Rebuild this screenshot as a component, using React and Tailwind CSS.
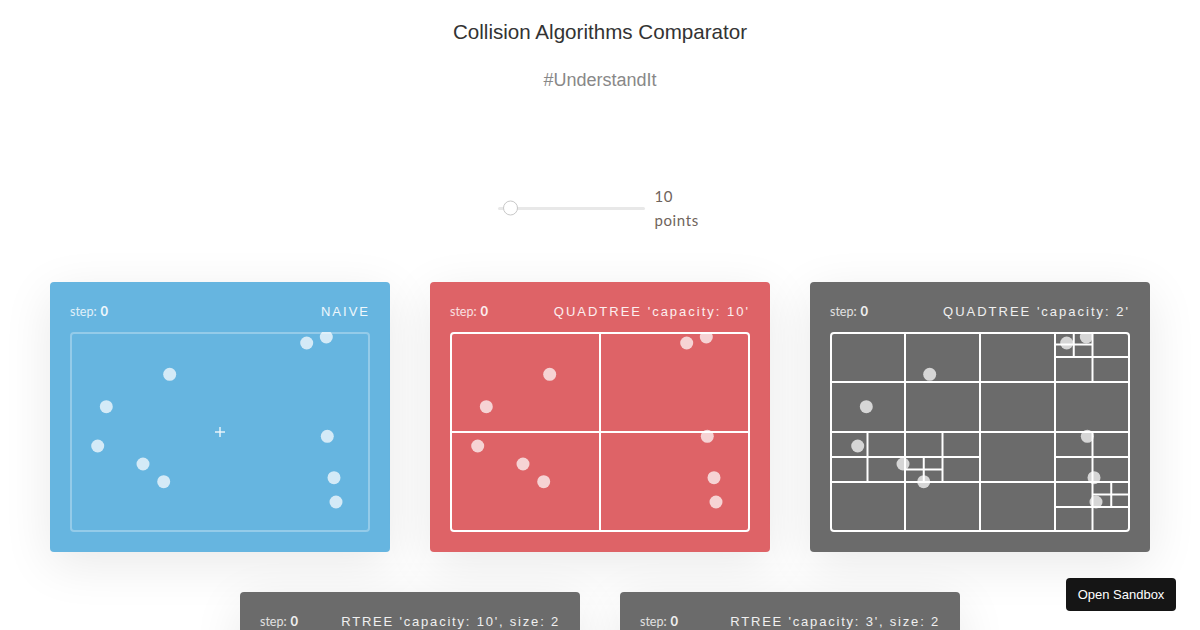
import React from 'react';

const POINTS = [
  [236.7, 11], [256.3, 5], [99.7, 42.3], [36.3, 74.7], [27.7, 114],
  [73, 132], [93.7, 149.7], [257.3, 104.3], [264, 145.7], [266, 170],
];

// [x1, y1, x2, y2] in canvas coords (300x200)
const QUAD_10 = [
  [150, 0, 150, 200],
  [0, 100, 300, 100],
];

const QUAD_2 = [
  ...QUAD_10,
  [75, 0, 75, 200],
  [225, 0, 225, 200],
  [0, 50, 300, 50],
  [0, 150, 300, 150],
  // top-right cell
  [262.5, 0, 262.5, 50],
  [225, 25, 300, 25],
  [243.75, 0, 243.75, 25],
  [225, 12.5, 262.5, 12.5],
  // middle-left cells
  [37.5, 100, 37.5, 150],
  [0, 125, 150, 125],
  [112.5, 100, 112.5, 150],
  [93.75, 125, 93.75, 150],
  [75, 137.5, 112.5, 137.5],
  // right cells
  [262.5, 100, 262.5, 200],
  [225, 125, 300, 125],
  [225, 175, 300, 175],
  [281.25, 150, 281.25, 175],
  [262.5, 162.5, 300, 162.5],
];

const CARDS = [
  { label: 'NAIVE', bg: 'bg-[#66b5e0]', kind: 'naive' },
  { label: "QUADTREE 'capacity: 10'", bg: 'bg-[#de6367]', kind: 'q10' },
  { label: "QUADTREE 'capacity: 2'", bg: 'bg-[#6b6b6b]', kind: 'q2' },
  { label: "RTREE 'capacity: 10', size: 2", bg: 'bg-[#6b6b6b]', kind: 'rtree', narrow: true },
  { label: "RTREE 'capacity: 3', size: 2", bg: 'bg-[#6b6b6b]', kind: 'rtree', narrow: true },
];

function Canvas({ kind }) {
  const lines = kind === 'q10' ? QUAD_10 : kind === 'q2' ? QUAD_2 : [];
  const frame = kind === 'naive' || kind === 'rtree' ? 'rgba(255,255,255,0.3)' : '#ffffff';
  return (
    <svg width="300" height="200" viewBox="0 0 300 200" className="block">
      {lines.map(([x1, y1, x2, y2], i) => (
        <line key={i} x1={x1} y1={y1} x2={x2} y2={y2} stroke="#fff" strokeWidth="2" />
      ))}
      {POINTS.map(([x, y], i) => (
        <circle key={i} cx={x} cy={y} r="6.5" fill="rgba(255,255,255,0.72)" />
      ))}
      {kind === 'naive' && (
        <g stroke="#fff" strokeWidth="1.4" opacity="0.9">
          <line x1="145" y1="100" x2="155" y2="100" />
          <line x1="150" y1="95" x2="150" y2="105" />
        </g>
      )}
      <rect x="1" y="1" width="298" height="198" rx="3" fill="none" stroke={frame} strokeWidth="2" />
    </svg>
  );
}

function Card({ label, bg, kind, narrow }) {
  return (
    <div className={`${bg} w-[340px] h-[270px] rounded-[4px] px-5 pt-[21px] shadow-[0_12px_50px_rgba(0,0,0,0.09)]`}>
      <div className="h-[18px] flex items-center justify-between text-white/90 font-['Liberation_Sans',sans-serif]">
        <span className="flex items-baseline gap-[4px]">
          <span className="text-[12.5px] font-['Lato',sans-serif] text-white/80">step:</span>
          <span className="text-[13px] font-bold font-['Lato',sans-serif]">0</span>
        </span>
        <span className={narrow ? 'text-[13px] tracking-[1.8px]' : 'text-[13px] tracking-[2px]'}>
          {label}
        </span>
      </div>
      <div className="mt-[11px]">
        <Canvas kind={kind} />
      </div>
    </div>
  );
}

export default function App() {
  return (
    <div className="h-[630px] overflow-hidden bg-white relative">
      <div className="flex flex-col items-center pt-[18px]">
        <h1 className="text-[20.6px] leading-[28px] text-[#333] font-['Liberation_Sans',sans-serif]">
          Collision Algorithms Comparator
        </h1>
        <p className="mt-[22px] text-[18px] leading-[25px] text-[#888] font-['Liberation_Sans',sans-serif]">
          #UnderstandIt
        </p>

        <div className="mt-[91px] flex items-center gap-[10px] pl-[2px]">
          <div className="relative w-[147px] h-[3px] bg-[#e8e8e8] rounded-full">
            <div className="absolute left-[5px] top-1/2 -translate-y-1/2 w-[15px] h-[15px] rounded-full bg-white border border-[#c8c8c8]" />
          </div>
          <div className="w-[50px] text-[15px] leading-[24px] tracking-[0.6px] text-[#6f645c] font-['Lato',sans-serif]">
            10 points
          </div>
        </div>

        <div className="mt-[50px] w-[1100px] flex flex-wrap justify-center gap-10">
          {CARDS.map((c, i) => (
            <Card key={i} {...c} />
          ))}
        </div>
      </div>

      <button className="fixed right-[24px] bottom-[19px] w-[110px] h-[33px] rounded-[4px] bg-[#151515] text-white text-[13px] font-['Liberation_Sans',sans-serif]">
        Open Sandbox
      </button>
    </div>
  );
}
